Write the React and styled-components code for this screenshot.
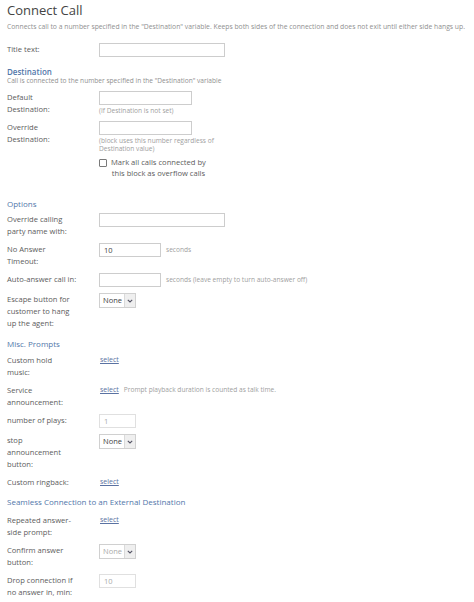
import React from "react";
import styled, { createGlobalStyle } from "styled-components";

const Global = createGlobalStyle`
  html, body { margin: 0; padding: 0; background: #fff; }
  body { font-family: "Open Sans", "Liberation Sans", sans-serif; color: #555; }
  * { box-sizing: border-box; }
`;

const Page = styled.div`
  padding: 1px 7px 0 7px;
  width: 474px;
`;

const Title = styled.h1`
  margin: 0;
  font-size: 13px;
  font-weight: 400;
  line-height: 18px;
  color: #444;
`;

const Description = styled.p`
  margin: 3px 0 0 0;
  font-size: 6.8px;
  line-height: 10px;
  color: #909090;
  white-space: nowrap;
`;

const Section = styled.section`
  margin-top: ${(p) => p.$mt || 0}px;
  display: flex;
  flex-direction: column;
`;

const SectionHead = styled.div`
  font-size: 8px;
  line-height: 10px;
  color: #5277aa;
  font-weight: ${(p) => (p.$bold ? 600 : 400)};
  margin-bottom: ${(p) => p.$mb || 0}px;
`;

const SectionSub = styled.div`
  font-size: 6.6px;
  line-height: 8px;
  color: #909090;
  margin-bottom: 6px;
`;

const Row = styled.div`
  display: grid;
  grid-template-columns: 92px 1fr;
  align-items: start;
  margin-bottom: ${(p) => (p.$mb === undefined ? 6 : p.$mb)}px;
`;

const Label = styled.div`
  font-size: 7.6px;
  line-height: 12px;
  color: #5c5c5c;
  white-space: nowrap;
`;

const Control = styled.div`
  display: flex;
  flex-direction: ${(p) => (p.$col ? "column" : "row")};
  align-items: ${(p) => (p.$col ? "flex-start" : "center")};
  gap: ${(p) => (p.$col ? 2 : 5)}px;
  min-height: 12px;
`;

const TextInput = styled.div`
  width: ${(p) => p.$w}px;
  height: 14px;
  border: 1px solid ${(p) => (p.$disabled ? "#e0e0e0" : "#cdcdcd")};
  background: #fff;
  font-size: 7.5px;
  line-height: 12px;
  padding: 0 4px;
  color: ${(p) => (p.$disabled ? "#aaa" : "#444")};
`;

const Hint = styled.span`
  font-size: 6.6px;
  line-height: 8px;
  color: #a0a0a0;
`;

const Select = styled.div`
  width: 37px;
  height: 15px;
  border: 1px solid #d0d0d0;
  display: flex;
  background: #fff;
`;

const SelectText = styled.div`
  flex: 1;
  font-size: 7.5px;
  line-height: 13px;
  padding-left: 3px;
  color: ${(p) => (p.$disabled ? "#aaa" : "#444")};
`;

const SelectArrow = styled.div`
  width: 11px;
  border-left: 1px solid #dadada;
  background: #efefef;
  display: flex;
  align-items: center;
  justify-content: center;
`;

const Link = styled.a`
  font-size: 7px;
  line-height: 12px;
  color: #5a72a2;
  text-decoration: underline;
  margin-left: 1px;
`;

const CheckRow = styled.label`
  display: flex;
  gap: 4px;
  align-items: flex-start;
`;

const Box = styled.span`
  width: 8px;
  height: 8px;
  border: 1px solid #7a7a7a;
  border-radius: 1px;
  margin-top: 1px;
  flex: none;
`;

const CheckText = styled.span`
  font-size: 7.6px;
  line-height: 11px;
  color: #5c5c5c;
  text-align: center;
  margin-top: -1px;
`;

const Chevron = () => (
  <svg width="6" height="4" viewBox="0 0 6 4">
    <path d="M0.8 0.8 L3 3 L5.2 0.8" fill="none" stroke="#556" strokeWidth="1.1" />
  </svg>
);

const Dropdown = ({ disabled }) => (
  <Select>
    <SelectText $disabled={disabled}>None</SelectText>
    <SelectArrow>
      <Chevron />
    </SelectArrow>
  </Select>
);

export default function App() {
  return (
    <Page>
      <Global />
      <Title>Connect Call</Title>
      <Description>
        Connects call to a number specified in the "Destination" variable. Keeps both sides of the connection and does not exit until either side hangs up.
      </Description>

      <Section $mt={11}>
        <Row>
          <Label>Title text:</Label>
          <Control>
            <TextInput $w={126} />
          </Control>
        </Row>
      </Section>

      <Section $mt={4}>
        <SectionHead $bold>Destination</SectionHead>
        <SectionSub>Call is connected to the number specified in the "Destination" variable</SectionSub>
        <Row>
          <Label>Default<br />Destination:</Label>
          <Control $col>
            <TextInput $w={93} />
            <Hint>(If Destination is not set)</Hint>
          </Control>
        </Row>
        <Row $mb={5}>
          <Label>Override<br />Destination:</Label>
          <Control $col>
            <TextInput $w={93} />
            <Hint>(block uses this number regardless of<br />Destination value)</Hint>
          </Control>
        </Row>
        <Row $mb={0}>
          <div />
          <CheckRow>
            <Box />
            <CheckText>Mark all calls connected by<br />this block as overflow calls</CheckText>
          </CheckRow>
        </Row>
      </Section>

      <Section $mt={20}>
        <SectionHead $mb={4}>Options</SectionHead>
        <Row>
          <Label>Override calling<br />party name with:</Label>
          <Control>
            <TextInput $w={126} />
          </Control>
        </Row>
        <Row>
          <Label>No Answer<br />Timeout:</Label>
          <Control>
            <TextInput $w={62}>10</TextInput>
            <Hint>seconds</Hint>
          </Control>
        </Row>
        <Row>
          <Label>Auto-answer call in:</Label>
          <Control>
            <TextInput $w={62} />
            <Hint>seconds (leave empty to turn auto-answer off)</Hint>
          </Control>
        </Row>
        <Row>
          <Label>Escape button for<br />customer to hang<br />up the agent:</Label>
          <Control>
            <Dropdown />
          </Control>
        </Row>
      </Section>

      <Section $mt={4}>
        <SectionHead $mb={5}>Misc. Prompts</SectionHead>
        <Row>
          <Label>Custom hold<br />music:</Label>
          <Control>
            <Link>select</Link>
          </Control>
        </Row>
        <Row>
          <Label>Service<br />announcement:</Label>
          <Control>
            <Link>select</Link>
            <Hint>Prompt playback duration is counted as talk time.</Hint>
          </Control>
        </Row>
        <Row>
          <Label>number of plays:</Label>
          <Control>
            <TextInput $w={37} $disabled>1</TextInput>
          </Control>
        </Row>
        <Row>
          <Label>stop<br />announcement<br />button:</Label>
          <Control>
            <Dropdown />
          </Control>
        </Row>
        <Row $mb={3}>
          <Label>Custom ringback:</Label>
          <Control>
            <Link>select</Link>
          </Control>
        </Row>
      </Section>

      <Section $mt={6}>
        <SectionHead $mb={7}>Seamless Connection to an External Destination</SectionHead>
        <Row>
          <Label>Repeated answer-<br />side prompt:</Label>
          <Control>
            <Link>select</Link>
          </Control>
        </Row>
        <Row>
          <Label>Confirm answer<br />button:</Label>
          <Control>
            <Dropdown disabled />
          </Control>
        </Row>
        <Row>
          <Label>Drop connection if<br />no answer in, min:</Label>
          <Control>
            <TextInput $w={37} $disabled>10</TextInput>
          </Control>
        </Row>
      </Section>
    </Page>
  );
}
